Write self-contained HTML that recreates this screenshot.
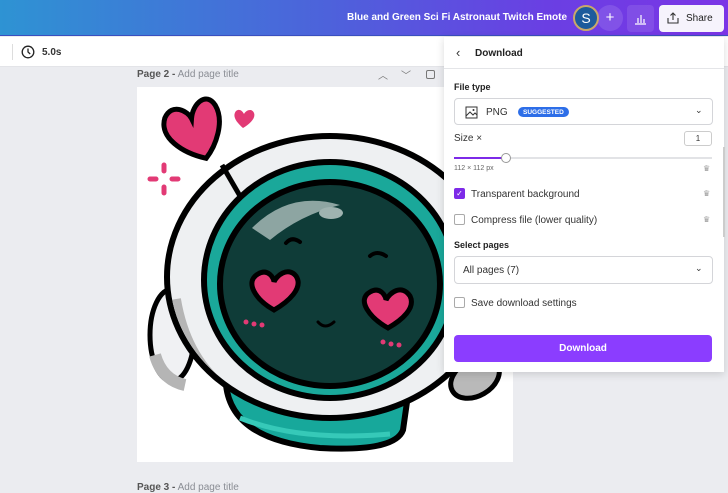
<!DOCTYPE html>
<html><head><meta charset="utf-8"><style>
*{margin:0;padding:0;box-sizing:border-box}
body{width:728px;height:490px;overflow:hidden;background:#ebecf0;font-family:"Liberation Sans",sans-serif;position:relative;color:#0e1318}
.hdr{position:absolute;left:0;top:0;width:728px;height:36px;background:linear-gradient(90deg,#2e93d3 0%,#4d62db 45%,#6a3fe3 75%,#7b35e6 100%);border-bottom:1px solid #3a4fbf}
.abs{position:absolute}
.tb{position:absolute;left:0;top:37px;width:728px;height:30px;background:#fff;border-bottom:1px solid #e3e4e8}
.canvas{position:absolute;left:137px;top:87px;width:376px;height:375px;background:#fff}
.panel{position:absolute;left:444px;top:37px;width:280px;height:335px;background:#fff;box-shadow:0 2px 8px rgba(0,0,0,.15)}
.lbl{font-size:9px;font-weight:bold;color:#222}
.row{font-size:10px;color:#333}
.cb{position:absolute;width:11px;height:11px;border:1px solid #aaa;border-radius:2px;background:#fff}
.crown{position:absolute;font-size:8px;color:#999}
</style></head><body>
<div class="hdr">
  <div class="abs" style="left:347px;top:12px;color:#fff;font-size:10px;font-weight:bold">Blue and Green Sci Fi Astronaut Twitch Emote</div>
  <div class="abs" style="left:597px;top:5px;width:26px;height:26px;border-radius:50%;background:rgba(255,255,255,.12);color:#fff;font-size:15px;text-align:center;line-height:25px">+</div>
  <div class="abs" style="left:573px;top:5px;width:26px;height:26px;border-radius:50%;background:#1d5b9c;border:2px solid #c9a86a;color:#fff;font-size:14px;text-align:center;line-height:22px">S</div>
  <div class="abs" style="left:627px;top:5px;width:27px;height:27px;border-radius:4px;background:rgba(255,255,255,.1)">
    <svg width="27" height="27" viewBox="0 0 27 27"><path d="M8 19h11M11 18v-5M14 18v-8M17 18v-4" stroke="#fff" stroke-width="1.2" fill="none"/></svg></div>
  <div class="abs" style="left:659px;top:5px;width:65px;height:27px;border-radius:4px;background:#f6f3fc;font-size:10px;color:#222;line-height:27px;padding-left:27px">Share
    <svg class="abs" style="left:7px;top:6px" width="14" height="14" viewBox="0 0 14 14"><path d="M2 7v5h10V7M7 9V2M4.5 4.5L7 2l2.5 2.5" stroke="#333" stroke-width="1.1" fill="none"/></svg></div>
</div>
<div class="tb">
  <div class="abs" style="left:12px;top:7px;width:1px;height:16px;background:#ddd"></div>
  <svg class="abs" style="left:21px;top:8px" width="14" height="14" viewBox="0 0 14 14"><circle cx="7" cy="7" r="5.8" stroke="#222" stroke-width="1.3" fill="none"/><path d="M7 3.5V7l2.2 2" stroke="#222" stroke-width="1.3" fill="none"/></svg>
  <div class="abs" style="left:42px;top:10px;font-size:10px;font-weight:bold;color:#333">5.0s</div>
</div>
<div class="abs" style="left:137px;top:69px;font-size:10px;color:#555"><b>Page 2 -</b> <span style="color:#8a8d94">Add page title</span></div>
<div class="abs" style="left:378px;top:67px;font-size:10px;color:#777">︿</div>
<div class="abs" style="left:401px;top:67px;font-size:10px;color:#777">﹀</div>
<div class="abs" style="left:426px;top:70px;width:9px;height:9px;border:1px solid #777;border-radius:2px"></div>
<div class="canvas">
<svg width="376" height="375" viewBox="137 87 376 375">
  <defs><clipPath id="hc"><ellipse cx="330" cy="277" rx="160" ry="138"/></clipPath></defs>
  <!-- ears -->
  <ellipse cx="172" cy="335" rx="22" ry="46" fill="#f0f1f3" stroke="#000" stroke-width="5"/>
  <path d="M155 355 Q162 380 185 385" stroke="#b5b5b5" stroke-width="12" fill="none"/>
  <ellipse cx="475" cy="378" rx="26" ry="18" fill="#b9b9b9" stroke="#000" stroke-width="5" transform="rotate(-30 475 378)"/>
  <!-- collar -->
  <path d="M226 385 Q232 440 320 448 Q395 452 403 430 L408 395 Z" fill="#17a89b" stroke="#000" stroke-width="6"/>
  <path d="M240 418 Q300 442 390 434" stroke="#36c9b8" stroke-width="5" fill="none"/>
  <!-- helmet -->
  <ellipse cx="330" cy="277" rx="163" ry="141" fill="#eef0f2" stroke="#000" stroke-width="6"/>
  <g clip-path="url(#hc)"><path d="M170 300 Q190 420 330 428 Q440 430 480 350" stroke="#b5b5b5" stroke-width="22" fill="none"/></g>
  <path d="M222 165 L240 196" stroke="#000" stroke-width="5"/>
  <ellipse cx="330" cy="280" rx="126" ry="118" fill="#1aa89a" stroke="#000" stroke-width="6"/>
  <ellipse cx="330" cy="284" rx="110" ry="102" fill="#0f3c38" stroke="#000" stroke-width="6"/>
  <path d="M252 228 Q290 190 340 205 Q300 215 270 240 Z" fill="#8da5a2"/>
  <ellipse cx="331" cy="213" rx="12" ry="6" fill="#9fb3b0"/>
  <!-- eyes -->
  <path d="M286 243 Q292 236 300 242" stroke="#000" stroke-width="4" fill="none" stroke-linecap="round"/>
  <path d="M370 256 Q377 250 386 256" stroke="#000" stroke-width="4" fill="none" stroke-linecap="round"/>
  <path d="M274 310 C256 300 244 282 258 274 C268 268 274 278 274 282 C276 276 288 266 296 276 C304 288 288 302 274 310Z" fill="#e23a75" stroke="#000" stroke-width="5"/>
  <path d="M388 328 C370 318 356 300 370 292 C380 286 386 296 386 300 C390 292 402 284 410 296 C416 308 402 320 388 328Z" fill="#e23a75" stroke="#000" stroke-width="5"/>
  <path d="M318 322 Q325 330 334 322" stroke="#000" stroke-width="3" fill="none" stroke-linecap="round"/>
  <g fill="#e23a75"><circle cx="246" cy="322" r="2.5"/><circle cx="254" cy="324" r="2.5"/><circle cx="262" cy="325" r="2.5"/><circle cx="383" cy="342" r="2.5"/><circle cx="391" cy="344" r="2.5"/><circle cx="399" cy="345" r="2.5"/></g>
  <!-- hearts -->
  <path d="M200 160 C178 150 158 130 168 112 C178 98 192 110 194 118 C198 104 214 94 220 110 C226 128 212 150 200 160Z" fill="#e23a75" stroke="#000" stroke-width="5" transform="rotate(-12 195 130)"/>
  <path d="M243 128 C236 122 232 116 236 111 C240 108 243 112 244 114 C246 110 252 108 254 113 C256 118 250 124 243 128Z" fill="#e23a75"/>
  <g stroke="#e23a75" stroke-width="5" stroke-linecap="round"><path d="M164 165v6M164 187v6M150 179h6M172 179h6"/></g>
</svg>
</div>
<div class="abs" style="left:137px;top:482px;font-size:10px;color:#555"><b>Page 3 -</b> <span style="color:#8a8d94">Add page title</span></div>
<div class="panel">
  <div class="abs" style="left:0;top:31px;width:280px;height:1px;background:#e4e5e8"></div>
  <div class="abs" style="left:12px;top:8px;font-size:13px;color:#333">‹</div>
  <div class="abs lbl" style="left:31px;top:11px;font-size:10px;color:#222">Download</div>
  <div class="abs lbl" style="left:10px;top:45px">File type</div>
  <div class="abs" style="left:10px;top:61px;width:259px;height:27px;border:1px solid #d4d5d9;border-radius:4px">
    <svg class="abs" style="left:10px;top:7px" width="13" height="13" viewBox="0 0 13 13"><rect x="1" y="1" width="11" height="11" stroke="#333" fill="none"/><path d="M1 10l4-4 3 3 2-2 2 2" stroke="#333" fill="none"/><circle cx="8.5" cy="4" r="1" fill="#333"/></svg>
    <div class="abs row" style="left:31px;top:8px">PNG</div>
    <div class="abs" style="left:63px;top:8px;background:#2d6ee8;color:#fff;font-size:6.5px;font-weight:bold;border-radius:6px;padding:1.5px 5px">SUGGESTED</div>
    <div class="abs" style="left:240px;top:6px;font-size:9px;color:#333">⌄</div>
  </div>
  <div class="abs row" style="left:10px;top:96px">Size ×</div>
  <div class="abs" style="left:240px;top:94px;width:28px;height:15px;border:1px solid #ccc;border-radius:3px;font-size:8px;text-align:center;line-height:13px;color:#333">1</div>
  <div class="abs" style="left:10px;top:120px;width:258px;height:2px;background:#e2e3e6"></div>
  <div class="abs" style="left:10px;top:120px;width:52px;height:2px;background:#7d2ae8"></div>
  <div class="abs" style="left:57px;top:116px;width:10px;height:10px;border-radius:50%;background:#fff;border:1px solid #999"></div>
  <div class="abs" style="left:10px;top:128px;font-size:7px;color:#666">112 × 112 px</div>
  <div class="crown" style="left:259px;top:127px">♛</div>
  <div class="cb" style="left:10px;top:151px;background:#7d2ae8;border-color:#7d2ae8;color:#fff;font-size:8px;line-height:9px;text-align:center">✓</div>
  <div class="abs row" style="left:27px;top:152px">Transparent background</div>
  <div class="crown" style="left:259px;top:152px">♛</div>
  <div class="cb" style="left:10px;top:177px"></div>
  <div class="abs row" style="left:27px;top:178px">Compress file (lower quality)</div>
  <div class="crown" style="left:259px;top:178px">♛</div>
  <div class="abs lbl" style="left:10px;top:203px">Select pages</div>
  <div class="abs" style="left:10px;top:219px;width:259px;height:28px;border:1px solid #d4d5d9;border-radius:4px">
    <div class="abs row" style="left:8px;top:8px">All pages (7)</div>
    <div class="abs" style="left:240px;top:6px;font-size:9px;color:#333">⌄</div>
  </div>
  <div class="cb" style="left:10px;top:260px"></div>
  <div class="abs row" style="left:27px;top:261px">Save download settings</div>
  <div class="abs" style="left:10px;top:298px;width:258px;height:27px;background:#8b3dff;border-radius:4px;color:#fff;font-size:10px;font-weight:bold;text-align:center;line-height:27px">Download</div>
  <div class="abs" style="left:279px;top:110px;width:2px;height:90px;background:#ccc"></div>
</div>
</body></html>
